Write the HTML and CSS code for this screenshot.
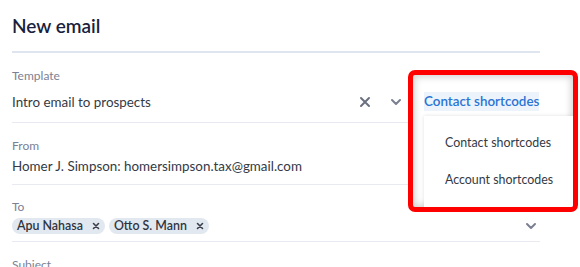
FILE: index.html
```html
<!DOCTYPE html>
<html>
<head>
<meta charset="utf-8">
<link rel="stylesheet" href="styles.css">
</head>
<body>
<div class="page">
  <h1 class="title">New email</h1>
  <div class="field field-template">
    <div class="label">Template</div>
    <div class="value select">
      <span>Intro email to prospects</span>
      <span class="icons">
        <svg class="ico-x" width="12" height="12" viewBox="0 0 12 12"><path d="M2 2L10 10M10 2L2 10" stroke="#6b7080" stroke-width="2" stroke-linecap="round"/></svg>
        <svg class="ico-chev" width="12" height="8" viewBox="0 0 12 8"><path d="M2 2L6 6L10 2" stroke="#7a8090" stroke-width="2" fill="none" stroke-linecap="round" stroke-linejoin="round"/></svg>
      </span>
    </div>
  </div>
  <div class="field">
    <div class="label">From</div>
    <div class="value">Homer J. Simpson: homersimpson.tax@gmail.com</div>
  </div>
  <div class="field field-to">
    <div class="label">To</div>
    <div class="value chips">
      <span class="chip">Apu Nahasa <svg class="chip-x" width="8" height="8" viewBox="0 0 8 8"><path d="M1.5 1.5L6.5 6.5M6.5 1.5L1.5 6.5" stroke="#3a3f4a" stroke-width="1.6" stroke-linecap="round"/></svg></span>
      <span class="chip">Otto S. Mann <svg class="chip-x" width="8" height="8" viewBox="0 0 8 8"><path d="M1.5 1.5L6.5 6.5M6.5 1.5L1.5 6.5" stroke="#3a3f4a" stroke-width="1.6" stroke-linecap="round"/></svg></span>
      <svg class="ico-chev right" width="12" height="8" viewBox="0 0 12 8"><path d="M2 2L6 6L10 2" stroke="#7a8090" stroke-width="2" fill="none" stroke-linecap="round" stroke-linejoin="round"/></svg>
    </div>
  </div>
  <div class="field">
    <div class="label">Subject</div>
  </div>
</div>
<div class="highlight-box">
  <div class="link-row"><span class="link">Contact shortcodes</span></div>
  <div class="menu">
    <div class="menu-item">Contact shortcodes</div>
    <div class="menu-item">Account shortcodes</div>
  </div>
</div>
</body>
</html>
```

FILE: styles.css
```css
html, body {
  margin: 0;
  padding: 0;
  background: #fff;
  font-family: Lato, "Noto Sans", sans-serif;
  color: #333a45;
  overflow: hidden;
}
.page {
  width: 528px;
  padding-left: 12px;
}
.title {
  margin: 0;
  padding-top: 15px;
  box-sizing: border-box;
  font-size: 19px;
  line-height: 22px;
  font-weight: 600;
  color: #1a1f3d;
  border-bottom: 2px solid #dfe5ee;
  height: 53px;
}
.field {
  border-bottom: 1px solid #e8e9f1;
  padding: 16px 0 8px;
}
.label {
  font-size: 12px;
  line-height: 14px;
  color: #7b8193;
}
.value {
  font-size: 13.4px;
  line-height: 20px;
  margin-top: 3px;
  color: #333a45;
}
.field-template {
  padding-bottom: 6px;
}
.select {
  display: flex;
  align-items: center;
  justify-content: space-between;
  height: 28px;
  margin-top: 5px;
}
.icons {
  display: flex;
  align-items: center;
  gap: 19px;
  margin-right: 138px;
}
.field-to {
  padding-top: 15px;
  padding-bottom: 7px;
}
.chips {
  display: flex;
  align-items: center;
  gap: 4px;
  margin-top: 4px;
}
.chip {
  display: inline-flex;
  align-items: center;
  height: 16px;
  padding: 0 5px 0 5px;
  background: #e2e8f0;
  border-radius: 8px;
  font-size: 12.4px;
  font-weight: 600;
  color: #2f3440;
}
.chip-x {
  margin-left: 9px;
}
.right {
  margin-left: auto;
  margin-right: 3px;
}
.highlight-box {
  position: absolute;
  left: 408px;
  top: 70px;
  width: 170px;
  height: 142px;
  box-sizing: border-box;
  border: 5px solid #ff0000;
  border-radius: 7px;
  background: #fff;
  box-shadow: inset 0 0 7px 2px rgba(0, 0, 0, 0.18);
  overflow: hidden;
  padding: 15px 0 0 11px;
}
.link-row {
  height: 26px;
}
.link {
  display: inline-block;
  font-size: 13.4px;
  line-height: 19px;
  font-weight: 600;
  color: #2a74d3;
  background: #edf3fb;
}
.menu {
  height: 91px;
  background: #fff;
  box-shadow: 0 0 4px rgba(0, 0, 0, 0.12);
  padding: 18px 0 0 21px;
  box-sizing: border-box;
}
.menu-item {
  font-size: 12.4px;
  line-height: 18px;
  color: #333a45;
  margin-bottom: 19px;
}
```
